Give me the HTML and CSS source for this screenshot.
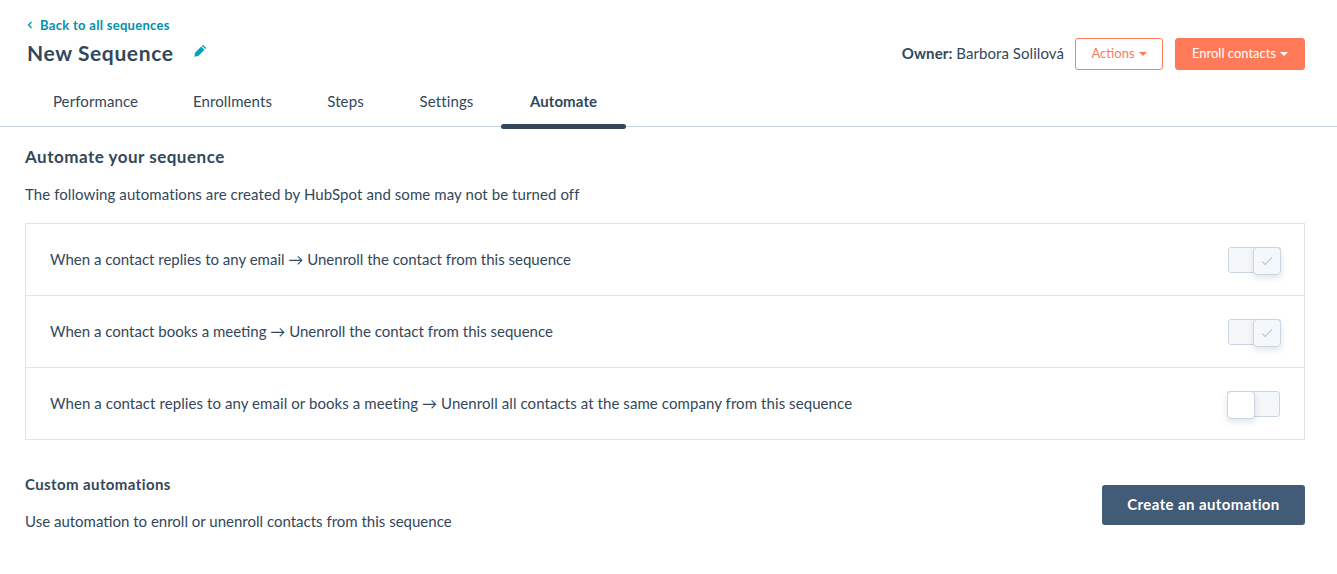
FILE: index.html
```html
<!DOCTYPE html>
<html lang="en">
<head>
<meta charset="utf-8">
<title>New Sequence</title>
<link rel="stylesheet" href="styles.css">
</head>
<body>
<header class="header">
  <div class="top">
    <div class="title-block">
      <a class="back" href="#"><svg class="back-icon" viewBox="0 0 6 8" width="6" height="8"><path d="M4.5 1 L1.5 4 L4.5 7" fill="none" stroke="#0091ae" stroke-width="1.2"/></svg>Back to all sequences</a>
      <div class="title-row">
        <h1 class="title">New Sequence</h1>
        <svg class="pencil" viewBox="0 0 14 14" width="13" height="13"><path d="M9.6 0.9 L13.1 4.4 L12 5.5 L8.5 2 Z M7.8 2.7 L11.3 6.2 L4.6 12.9 L0.4 13.6 L1.1 9.4 Z" fill="#00a4bd"/></svg>
      </div>
    </div>
    <div class="actions">
      <span class="owner"><b>Owner:</b> Barbora Solilová</span>
      <button class="btn btn-outline">Actions<i class="caret"></i></button>
      <button class="btn btn-solid">Enroll contacts<i class="caret"></i></button>
    </div>
  </div>
  <nav class="tabs">
    <a class="tab tab-1">Performance</a>
    <a class="tab tab-2">Enrollments</a>
    <a class="tab tab-3">Steps</a>
    <a class="tab tab-4">Settings</a>
    <a class="tab tab-5 active">Automate</a>
  </nav>
</header>
<main class="main">
  <h2 class="h2">Automate your sequence</h2>
  <p class="intro">The following automations are created by HubSpot and some may not be turned off</p>
  <div class="list">
    <div class="row">
      <span class="row-text">When a contact replies to any email → Unenroll the contact from this sequence</span>
      <div class="toggle on"><span class="knob"><svg viewBox="0 0 12 10" width="12" height="10"><path d="M1 5.5 L4.2 8.5 L11 1.5" fill="none" stroke="#b9c9d9" stroke-width="1.1"/></svg></span></div>
    </div>
    <div class="row">
      <span class="row-text">When a contact books a meeting → Unenroll the contact from this sequence</span>
      <div class="toggle on"><span class="knob"><svg viewBox="0 0 12 10" width="12" height="10"><path d="M1 5.5 L4.2 8.5 L11 1.5" fill="none" stroke="#b9c9d9" stroke-width="1.1"/></svg></span></div>
    </div>
    <div class="row">
      <span class="row-text row-text-long">When a contact replies to any email or books a meeting → Unenroll all contacts at the same company from this sequence</span>
      <div class="toggle off"><span class="knob"></span></div>
    </div>
  </div>
  <section class="custom">
    <div>
      <h3 class="h3">Custom automations</h3>
      <p class="custom-text">Use automation to enroll or unenroll contacts from this sequence</p>
    </div>
    <button class="btn-dark">Create an automation</button>
  </section>
</main>
</body>
</html>
```
FILE: styles.css
```css
* { box-sizing: border-box; }
html, body { margin: 0; padding: 0; }
body {
  width: 1337px;
  height: 574px;
  overflow: hidden;
  background: #fff;
  color: #33475b;
  font-family: "Lato", "Liberation Sans", sans-serif;
  font-size: 15px;
}
.header { border-bottom: 1px solid #cbd6e2; height: 127px; padding: 0 32px 0 25px; }
.top { display: flex; justify-content: space-between; height: 82px; }
.title-block { padding: 16px 0 0 2px; }
.back { display: flex; align-items: center; gap: 7px; height: 17px; color: #0091ae; font-size: 13px; font-weight: 700; letter-spacing: .3px; text-decoration: none; }
.title-row { display: flex; align-items: center; gap: 20px; margin-top: 4px; height: 30px; }
.title { margin: 0; font-size: 21px; font-weight: 700; letter-spacing: .62px; }
.pencil { margin-top: -4px; }
.actions { display: flex; align-items: center; padding-top: 26px; height: 82px; }
.owner { font-size: 15px; letter-spacing: .07px; margin: 0 11px 2px 0; }
.btn { height: 32px; border-radius: 3px; font-family: inherit; font-size: 13px; padding: 0 0 2px; border: 1px solid #ff7a59; }
.btn-outline { width: 88px; background: #fff; color: #ff7a59; margin-right: 12px; }
.btn-solid { width: 130px; background: #ff7a59; color: #fff; }
.caret { display: inline-block; margin-left: 4px; vertical-align: 2px; border: 4px solid transparent; border-bottom: 0; border-top-color: currentColor; }
.tabs { display: flex; height: 45px; }
.tab { display: flex; justify-content: center; align-items: center; height: 38px; font-size: 15px; letter-spacing: .1px; }
.tab-1 { width: 141px; }
.tab-2 { width: 133px; }
.tab-3 { width: 93px; }
.tab-4 { width: 109px; }
.tab-5 { width: 125px; font-weight: 700; position: relative; }
.tab-5::after { content: ""; position: absolute; left: 0; right: 0; top: 42px; height: 5px; border-radius: 3px; background: #33475b; }
.main { padding: 0 32px 0 25px; }
.h2 { margin: 20px 0 0; font-size: 17px; line-height: 20px; font-weight: 700; letter-spacing: .5px; }
.intro { margin: 18px 0 0; font-size: 15px; line-height: 18px; letter-spacing: .08px; }
.list { margin-top: 20px; border: 1px solid #dfe3eb; }
.row { display: flex; justify-content: space-between; align-items: center; height: 72px; padding: 0 23px 0 24px; }
.row:first-child { height: 71px; }
.row + .row { border-top: 1px solid #dfe3eb; }
.row-text { font-size: 15px; margin-bottom: 2px; }
.row-text-long { letter-spacing: .08px; }
.toggle { position: relative; width: 53px; height: 26px; border: 1px solid #cbd6e2; border-radius: 3px; background: #f5f8fa; }
.toggle.off { margin-right: 1px; }
.knob { position: absolute; top: -1px; width: 28px; height: 28px; display: flex; align-items: center; justify-content: center; border: 1px solid #cbd6e2; border-radius: 4px; box-shadow: 0 3px 6px rgba(45,62,80,.14); }
.on .knob { right: -1px; background: #f5f8fa; }
.off .knob { left: -1px; background: #fff; }
.custom { display: flex; justify-content: space-between; align-items: flex-start; margin-top: 35px; }
.h3 { margin: 0; font-size: 15px; line-height: 18px; font-weight: 700; letter-spacing: .4px; }
.custom-text { margin: 19px 0 0; font-size: 15px; line-height: 18px; letter-spacing: 0; }
.btn-dark { width: 203px; height: 40px; margin-top: 10px; padding: 0 0 2px; background: #425b76; color: #fff; border: 0; border-radius: 3px; font-family: inherit; font-size: 15px; font-weight: 700; letter-spacing: .4px; }
```
